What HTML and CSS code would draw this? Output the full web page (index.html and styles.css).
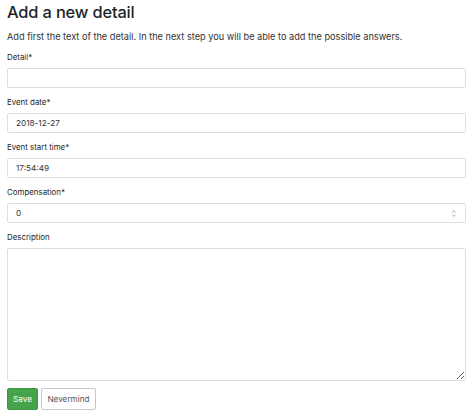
FILE: index.html
```html
<!DOCTYPE html>
<html lang="en">
<head>
<meta charset="utf-8">
<title>Add a new detail</title>
<link rel="stylesheet" href="styles.css">
</head>
<body>
<div class="page">
  <h1 class="title">Add a new detail</h1>
  <p class="intro">Add first the text of the detail. In the next step you will be able to add the possible answers.</p>
  <form class="form">
    <div class="group">
      <label class="label">Detail*</label>
      <input class="control" type="text" value="">
    </div>
    <div class="group">
      <label class="label">Event date*</label>
      <input class="control" type="text" value="2018-12-27">
    </div>
    <div class="group">
      <label class="label">Event start time*</label>
      <input class="control" type="text" value="17:54:49">
    </div>
    <div class="group">
      <label class="label">Compensation*</label>
      <div class="number-wrap">
        <input class="control" type="text" value="0">
        <svg class="spinner" width="6" height="9" viewBox="0 0 6 9"><path d="M1.2 3.4 L3 1.6 L4.8 3.4" fill="none" stroke="#a0a0a0" stroke-width="0.9"/><path d="M1.2 5.6 L3 7.4 L4.8 5.6" fill="none" stroke="#a0a0a0" stroke-width="0.9"/></svg>
      </div>
    </div>
    <div class="group">
      <label class="label">Description</label>
      <textarea class="control area"></textarea>
    </div>
    <div class="actions">
      <button type="button" class="btn btn-save">Save</button>
      <button type="button" class="btn btn-cancel">Nevermind</button>
    </div>
  </form>
</div>
</body>
</html>
```
FILE: styles.css
```css
html, body {
  margin: 0;
  padding: 0;
  background: #fff;
}
.page {
  padding: 0 8px 0 7px;
  font-family: Inter, "Liberation Sans", sans-serif;
  color: #212529;
}
.title {
  margin: 0;
  padding-top: 2px;
  font-size: 16.4px;
  font-weight: 500;
  line-height: 20px;
  height: 20px;
  letter-spacing: -0.15px;
}
.intro {
  margin: 8px 0 0 0;
  font-size: 9.2px;
  line-height: 14px;
  height: 14px;
  color: #333;
}
.form {
  margin-top: 7px;
  display: flex;
  flex-direction: column;
}
.group {
  display: flex;
  flex-direction: column;
  margin-bottom: 8px;
}
.label {
  display: block;
  font-size: 7.9px;
  font-weight: 400;
  line-height: 12px;
  height: 12px;
  margin-bottom: 5px;
  color: #1e1e1e;
}
.control {
  display: block;
  box-sizing: border-box;
  width: 100%;
  height: 20px;
  margin: 0;
  border: 1px solid #dedede;
  border-radius: 2px;
  padding: 0 8px;
  font-family: Inter, "Liberation Sans", sans-serif;
  font-size: 8.2px;
  color: #333;
  background: #fff;
  outline: none;
}
.number-wrap {
  position: relative;
  height: 20px;
}
.spinner {
  position: absolute;
  right: 9px;
  top: 6px;
}
.area {
  height: 133px;
  resize: vertical;
  padding: 4px 8px;
}
.actions {
  display: flex;
  gap: 3px;
  margin-top: -1px;
}
.btn {
  height: 22px;
  border-radius: 2px;
  font-family: Inter, "Liberation Sans", sans-serif;
  font-size: 8.2px;
  padding: 0 4px;
  cursor: pointer;
}
.btn-save {
  background: #45a349;
  border: 1px solid #3e9a42;
  color: #fff;
  width: 31px;
}
.btn-cancel {
  background: #fff;
  border: 1px solid #c8c8c8;
  color: #555;
  width: 55px;
}
```
